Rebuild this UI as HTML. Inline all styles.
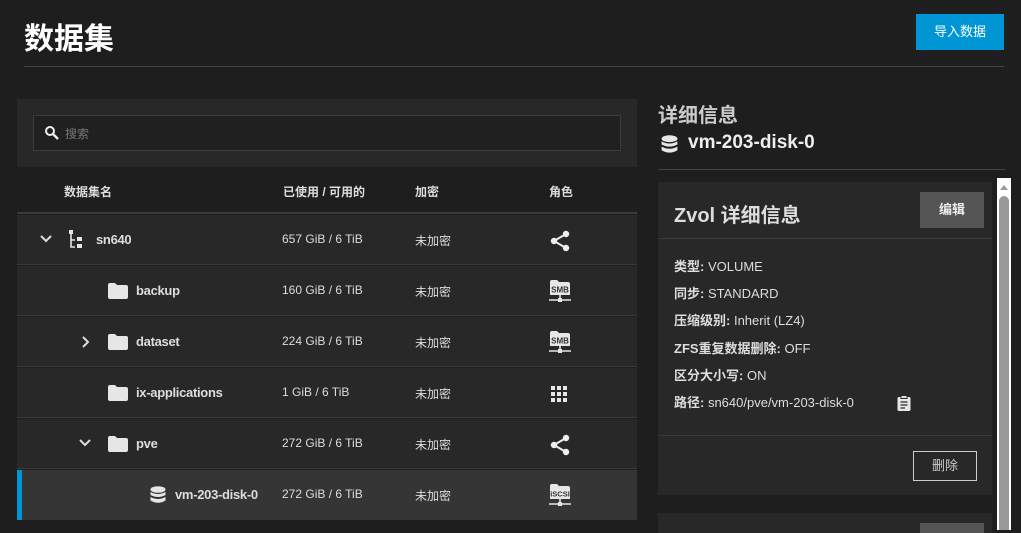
<!DOCTYPE html>
<html><head><meta charset="utf-8"><style>
*{margin:0;padding:0;box-sizing:border-box}
body{width:1021px;height:530px;overflow:hidden;background:#1e1e1e;font-family:"Liberation Sans","Noto Sans CJK SC",sans-serif;color:#ddd;position:relative}
.a{position:absolute}
.row{position:absolute;left:17px;width:620px;height:50px;background:#282828;border-bottom:1px solid #3a3a3a}
.row .n{position:absolute;top:17px;font-size:13px;font-weight:bold;color:#ddd;letter-spacing:-0.3px}
.row .u{position:absolute;left:265px;top:17px;font-size:12px;color:#ddd}
.row .e{position:absolute;left:398px;top:17px;font-size:12px;color:#ddd}
.row .r{position:absolute;left:531px;top:14px}
.row .ic{position:absolute;top:15px}
.kv{position:absolute;left:674px;font-size:13px;color:#ddd}
.kv b{font-weight:bold}
</style></head><body>
<div class="a" style="left:24px;top:14px;font-size:30px;font-weight:bold;color:#fff">数据集</div>
<div class="a" style="left:916px;top:14px;width:88px;height:36px;background:#0095d5;color:#fff;font-size:13px;line-height:36px;text-align:center">导入数据</div>
<div class="a" style="left:24px;top:66px;width:980px;height:1px;background:#444"></div>

<div class="a" style="left:17px;top:99px;width:620px;height:68px;background:#282828"></div>
<div class="a" style="left:33px;top:115px;width:588px;height:36px;border:1px solid #3c3c3c;background:#202020"></div>
<svg class="a" style="left:44px;top:125px" width="16" height="16" viewBox="0 0 16 16"><circle cx="6" cy="6" r="4" fill="none" stroke="#eee" stroke-width="2"/><path d="M9 9l5 5" stroke="#eee" stroke-width="2.4"/></svg>
<div class="a" style="left:65px;top:125px;font-size:12px;color:#777">搜索</div>

<div class="a" style="left:17px;top:167px;width:620px;height:47px;background:#1e1e1e;border-bottom:2px solid #3a3a3a"></div>
<div class="a" style="left:64px;top:183px;font-size:12px;font-weight:bold">数据集名</div>
<div class="a" style="left:283px;top:183px;font-size:12px;font-weight:bold">已使用 / 可用的</div>
<div class="a" style="left:415px;top:183px;font-size:12px;font-weight:bold">加密</div>
<div class="a" style="left:549px;top:183px;font-size:12px;font-weight:bold">角色</div>

<svg width="0" height="0" style="position:absolute"><defs>
<symbol id="sh" viewBox="0 0 24 24"><path d="M18 5L6 12L18 19" stroke="#eee" stroke-width="2" fill="none"/><circle cx="18" cy="5" r="3.2" fill="#eee"/><circle cx="6" cy="12" r="3.2" fill="#eee"/><circle cx="18" cy="19" r="3.2" fill="#eee"/></symbol>
<symbol id="fo" viewBox="0 0 20 16"><path d="M0 2Q0 0 2 0H7L9 2H18Q20 2 20 4V14Q20 16 18 16H2Q0 16 0 14Z" fill="#e6e6e6"/></symbol>
<symbol id="db" viewBox="0 0 16 18"><ellipse cx="8" cy="3.5" rx="7.5" ry="3.3" fill="#e6e6e6"/><path d="M0.5 6Q8 10 15.5 6V9Q8 13 0.5 9Z" fill="#e6e6e6"/><path d="M0.5 11Q8 15 15.5 11V14.5Q8 19 0.5 14.5Z" fill="#e6e6e6"/></symbol>
</defs></svg>

<div class="row" style="top:215px"><svg class="ic" style="left:22px;top:19px" width="14" height="10" viewBox="0 0 14 10"><path d="M2 2l5 5 5-5" stroke="#ddd" stroke-width="2" fill="none"/></svg>
<svg class="ic" style="left:51px;top:14px" width="16" height="22" viewBox="0 0 16 22"><rect x="1" y="1" width="4" height="4" fill="#e6e6e6"/><path d="M3 5V18H7M3 11H7" stroke="#e6e6e6" stroke-width="1.6" fill="none"/><rect x="9" y="8" width="5" height="4" fill="#e6e6e6"/><rect x="9" y="15" width="5" height="4" fill="#e6e6e6"/></svg>
<span class="n" style="left:79px">sn640</span><span class="u">657 GiB / 6 TiB</span><span class="e">未加密</span><svg class="r" width="24" height="24"><use href="#sh"/></svg></div>

<div class="row" style="top:266px"><svg class="ic" style="left:91px;top:17px" width="20" height="16"><use href="#fo"/></svg><span class="n" style="left:119px">backup</span><span class="u">160 GiB / 6 TiB</span><span class="e">未加密</span>
<svg class="r" style="left:531px;top:12px" width="24" height="26" viewBox="0 0 24 26"><path d="M2 4Q2 2 4 2H9L11 4H20Q22 4 22 6V17H2Z" fill="#e6e6e6"/><text x="12" y="14.5" font-size="8" font-weight="bold" font-family="Liberation Sans" fill="#333" text-anchor="middle">SMB</text><path d="M12 17V22M1 22H23" stroke="#e6e6e6" stroke-width="1.6"/><rect x="10" y="20" width="4" height="4" fill="#e6e6e6"/></svg></div>

<div class="row" style="top:317px"><svg class="ic" style="left:64px;top:18px" width="10" height="14" viewBox="0 0 10 14"><path d="M2 2l5 5-5 5" stroke="#ddd" stroke-width="2" fill="none"/></svg><svg class="ic" style="left:91px;top:17px" width="20" height="16"><use href="#fo"/></svg><span class="n" style="left:119px">dataset</span><span class="u">224 GiB / 6 TiB</span><span class="e">未加密</span>
<svg class="r" style="left:531px;top:12px" width="24" height="26" viewBox="0 0 24 26"><path d="M2 4Q2 2 4 2H9L11 4H20Q22 4 22 6V17H2Z" fill="#e6e6e6"/><text x="12" y="14.5" font-size="8" font-weight="bold" font-family="Liberation Sans" fill="#333" text-anchor="middle">SMB</text><path d="M12 17V22M1 22H23" stroke="#e6e6e6" stroke-width="1.6"/><rect x="10" y="20" width="4" height="4" fill="#e6e6e6"/></svg></div>

<div class="row" style="top:368px"><svg class="ic" style="left:91px;top:17px" width="20" height="16"><use href="#fo"/></svg><span class="n" style="left:119px">ix-applications</span><span class="u">1 GiB / 6 TiB</span><span class="e">未加密</span>
<svg class="r" style="left:534px;top:18px" width="16" height="16" viewBox="0 0 16 16" fill="#e6e6e6"><rect x="0" y="0" width="4" height="4"/><rect x="6" y="0" width="4" height="4"/><rect x="12" y="0" width="4" height="4"/><rect x="0" y="6" width="4" height="4"/><rect x="6" y="6" width="4" height="4"/><rect x="12" y="6" width="4" height="4"/><rect x="0" y="12" width="4" height="4"/><rect x="6" y="12" width="4" height="4"/><rect x="12" y="12" width="4" height="4"/></svg></div>

<div class="row" style="top:419px"><svg class="ic" style="left:61px;top:19px" width="14" height="10" viewBox="0 0 14 10"><path d="M2 2l5 5 5-5" stroke="#ddd" stroke-width="2" fill="none"/></svg><svg class="ic" style="left:91px;top:17px" width="20" height="16"><use href="#fo"/></svg><span class="n" style="left:119px">pve</span><span class="u">272 GiB / 6 TiB</span><span class="e">未加密</span><svg class="r" width="24" height="24"><use href="#sh"/></svg></div>

<div class="row" style="top:470px;background:#353535;border-bottom:none"><div class="a" style="left:0;top:0;width:5px;height:50px;background:#0095d5"></div><svg class="ic" style="left:133px;top:16px" width="16" height="18"><use href="#db"/></svg><span class="n" style="left:158px">vm-203-disk-0</span><span class="u">272 GiB / 6 TiB</span><span class="e">未加密</span>
<svg class="r" style="left:531px;top:12px" width="24" height="26" viewBox="0 0 24 26"><path d="M2 4Q2 2 4 2H9L11 4H20Q22 4 22 6V17H2Z" fill="#e6e6e6"/><text x="12" y="14.5" font-size="7.5" font-weight="bold" font-family="Liberation Sans" fill="#333" text-anchor="middle">iSCSI</text><path d="M12 17V22M1 22H23" stroke="#e6e6e6" stroke-width="1.6"/><rect x="10" y="20" width="4" height="4" fill="#e6e6e6"/></svg></div>

<div class="a" style="left:658px;top:99px;font-size:20px;font-weight:bold;color:#ccc">详细信息</div>
<svg class="a" style="left:661px;top:135px" width="17" height="19"><use href="#db"/></svg>
<div class="a" style="left:688px;top:132px;font-size:19px;font-weight:bold;color:#eee">vm-203-disk-0</div>
<div class="a" style="left:658px;top:169px;width:347px;height:1px;background:#444"></div>

<div class="a" style="left:658px;top:182px;width:334px;height:313px;background:#282828"></div>
<div class="a" style="left:674px;top:199px;font-size:20px;font-weight:bold;color:#ddd">Zvol 详细信息</div>
<div class="a" style="left:920px;top:192px;width:64px;height:36px;background:#555;font-size:13px;font-weight:bold;line-height:36px;text-align:center;color:#eee">编辑</div>
<div class="a" style="left:658px;top:238px;width:334px;height:1px;background:#3a3a3a"></div>
<div class="kv" style="top:256px"><b>类型:</b> VOLUME</div>
<div class="kv" style="top:283px"><b>同步:</b> STANDARD</div>
<div class="kv" style="top:310px"><b>压缩级别:</b> Inherit (LZ4)</div>
<div class="kv" style="top:338px"><b>ZFS重复数据删除:</b> OFF</div>
<div class="kv" style="top:365px"><b>区分大小写:</b> ON</div>
<div class="kv" style="top:392px"><b>路径:</b> sn640/pve/vm-203-disk-0</div>
<svg class="a" style="left:897px;top:395px" width="14" height="16" viewBox="0 0 14 16"><rect x="0.5" y="2" width="13" height="14" rx="1.5" fill="#e6e6e6"/><rect x="4" y="0.5" width="6" height="3" fill="#e6e6e6" stroke="#282828"/><path d="M3.5 7H10.5M3.5 10H10.5M3.5 13H8" stroke="#282828" stroke-width="1.3"/></svg>
<div class="a" style="left:658px;top:435px;width:334px;height:1px;background:#3a3a3a"></div>
<div class="a" style="left:913px;top:451px;width:64px;height:30px;border:1px solid #ccc;font-size:13px;line-height:28px;text-align:center;color:#ccc">删除</div>
<div class="a" style="left:658px;top:513px;width:334px;height:20px;background:#282828"></div>
<div class="a" style="left:920px;top:523px;width:64px;height:10px;background:#555"></div>

<div class="a" style="left:997px;top:178px;width:14px;height:352px;background:#fff"></div>
<svg class="a" style="left:998px;top:182px" width="12" height="10"><path d="M2 8L6 3L10 8Z" fill="#999"/></svg>
<div class="a" style="left:999px;top:196px;width:10px;height:334px;background:#999;border-radius:5px 5px 0 0"></div>
</body></html>
